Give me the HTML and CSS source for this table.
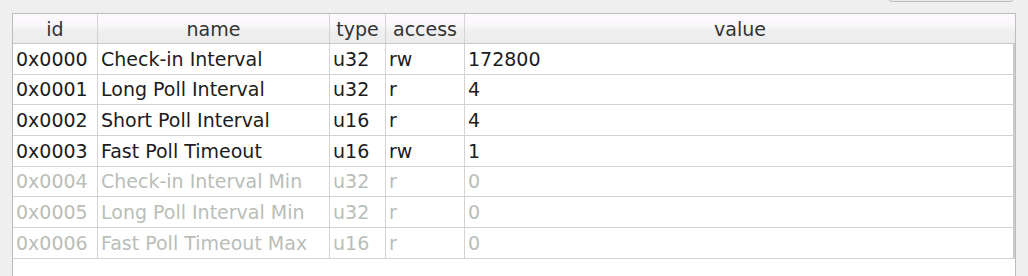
FILE: index.html
```html
<!DOCTYPE html>
<html>
<head>
<meta charset="utf-8">
<link rel="stylesheet" href="styles.css">
</head>
<body>
  <div class="toolbar">
    <button class="btn" type="button" aria-label="Refresh"></button>
  </div>
  <div class="frame">
    <div class="row head">
      <div class="cell c-id">id</div>
      <div class="cell c-name">name</div>
      <div class="cell c-type">type</div>
      <div class="cell c-access">access</div>
      <div class="cell c-value">value</div>
    </div>
    <div class="row">
      <div class="cell c-id">0x0000</div>
      <div class="cell c-name">Check-in Interval</div>
      <div class="cell c-type">u32</div>
      <div class="cell c-access">rw</div>
      <div class="cell c-value">172800</div>
    </div>
    <div class="row">
      <div class="cell c-id">0x0001</div>
      <div class="cell c-name">Long Poll Interval</div>
      <div class="cell c-type">u32</div>
      <div class="cell c-access">r</div>
      <div class="cell c-value">4</div>
    </div>
    <div class="row">
      <div class="cell c-id">0x0002</div>
      <div class="cell c-name">Short Poll Interval</div>
      <div class="cell c-type">u16</div>
      <div class="cell c-access">r</div>
      <div class="cell c-value">4</div>
    </div>
    <div class="row">
      <div class="cell c-id">0x0003</div>
      <div class="cell c-name">Fast Poll Timeout</div>
      <div class="cell c-type">u16</div>
      <div class="cell c-access">rw</div>
      <div class="cell c-value">1</div>
    </div>
    <div class="row disabled">
      <div class="cell c-id">0x0004</div>
      <div class="cell c-name">Check-in Interval Min</div>
      <div class="cell c-type">u32</div>
      <div class="cell c-access">r</div>
      <div class="cell c-value">0</div>
    </div>
    <div class="row disabled">
      <div class="cell c-id">0x0005</div>
      <div class="cell c-name">Long Poll Interval Min</div>
      <div class="cell c-type">u32</div>
      <div class="cell c-access">r</div>
      <div class="cell c-value">0</div>
    </div>
    <div class="row disabled">
      <div class="cell c-id">0x0006</div>
      <div class="cell c-name">Fast Poll Timeout Max</div>
      <div class="cell c-type">u16</div>
      <div class="cell c-access">r</div>
      <div class="cell c-value">0</div>
    </div>
  </div>
</body>
</html>
```

FILE: styles.css
```css
html, body {
  margin: 0;
  padding: 0;
  background: #efefef;
  overflow: hidden;
}

body {
  font-family: "DejaVu Sans", "Liberation Sans", sans-serif;
  font-size: 19px;
  color: #1c1c1c;
  width: 1028px;
  height: 276px;
}

/* toolbar above the grid; only the bottom of its button is visible */
.toolbar {
  height: 13px;
  display: flex;
  justify-content: flex-end;
  padding-right: 14px;
}

.btn {
  width: 126px;
  height: 30px;
  margin-top: -28px;
  border: 1px solid #bdbdbd;
  border-radius: 4px;
  background: linear-gradient(#fbfbfb, #eaeaea);
}

.frame {
  margin-left: 12px;
  width: 1002px;
  height: 262px;
  border: 1px solid #bdbdbd;
  border-bottom: none;
  background: #fff;
  overflow: hidden;
}

.row {
  display: flex;
  height: 29.66px;
  border-bottom: 1px solid #d3d3d3;
}

.row.head {
  height: 29px;
  border-bottom: 1px solid #c8c8c8;
  background: linear-gradient(#fdfafd 0%, #faf7fa 40%, #efefef 60%, #ececec 100%);
  color: #333;
}

.cell {
  display: flex;
  align-items: center;
  padding-left: 3px;
  border-right: 1px solid #d3d3d3;
  box-sizing: border-box;
  white-space: nowrap;
  overflow: hidden;
}

.head .cell {
  justify-content: center;
  padding-left: 0;
}

.c-id { width: 85px; }
.c-name { width: 232px; }
.c-type { width: 56px; }
.c-access { width: 79px; }
.c-value {
  flex: 1;
  border-right: 2px solid #cacaca;
}

.head .c-value {
  border-right: none;
}

.disabled {
  color: #b9beb7;
}
```
